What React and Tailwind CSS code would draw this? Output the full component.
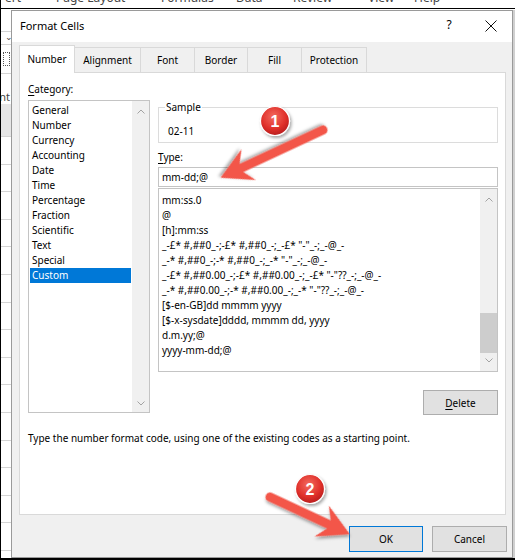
import React from "react";

const cats = ["General","Number","Currency","Accounting","Date","Time","Percentage","Fraction","Scientific","Text","Special","Custom"];
const codes = [
  "mm:ss.0",
  "@",
  "[h]:mm:ss",
  '_-£* #,##0_-;-£* #,##0_-;_-£* "-"_-;_-@_-',
  '_-* #,##0_-;-* #,##0_-;_-* "-"_-;_-@_-',
  '_-£* #,##0.00_-;-£* #,##0.00_-;_-£* "-"??_-;_-@_-',
  '_-* #,##0.00_-;-* #,##0.00_-;_-* "-"??_-;_-@_-',
  "[$-en-GB]dd mmmm yyyy",
  "[$-x-sysdate]dddd, mmmm dd, yyyy",
  "d.m.yy;@",
  "yyyy-mm-dd;@",
];

const tabs = [
  { t: "Number", w: "w-[56px]", sel: true },
  { t: "Alignment", w: "w-[66px]" },
  { t: "Font", w: "w-[54px]" },
  { t: "Border", w: "w-[53px]" },
  { t: "Fill", w: "w-[54px]" },
  { t: "Protection", w: "w-[65px]" },
];

function Up() {
  return (
    <svg width="8" height="5" viewBox="0 0 8 5"><polyline points="0.5,4.5 4,1 7.5,4.5" fill="none" stroke="#a3a3a3" strokeWidth="1" /></svg>
  );
}
function Down() {
  return (
    <svg width="8" height="5" viewBox="0 0 8 5"><polyline points="0.5,0.5 4,4 7.5,0.5" fill="none" stroke="#a3a3a3" strokeWidth="1" /></svg>
  );
}

function Arrow({ x, y, angle, len }) {
  const L = len;
  return (
    <g filter="url(#sh)" transform={`translate(${x} ${y}) rotate(${angle})`}>
      <line x1="0" y1="0" x2={L - 22} y2="0" stroke="#f3564a" strokeWidth="9" strokeLinecap="round" />
      <polygon points={`${L - 23},-4.5 ${L - 31},-17 ${L},0 ${L - 31},17 ${L - 23},4.5`} fill="#f3564a" />
    </g>
  );
}

function Badge({ x, y, n }) {
  return (
    <g>
      <circle cx={x} cy={y} r="14.5" fill="url(#rb)" stroke="#ffffff" strokeWidth="1.2" filter="url(#sh)" />
      <text x={x} y={y + 5.5} textAnchor="middle" fill="#ffffff" fontFamily="Liberation Sans, Arial, sans-serif" fontWeight="700" fontSize="16">{n}</text>
    </g>
  );
}

export default function App() {
  return (
    <div className="relative w-[515px] h-[560px] overflow-hidden bg-white text-black font-['Noto_Sans',sans-serif] text-[10px] leading-[14px]">
      {/* ribbon remnants */}
      <div className="h-[8px] overflow-hidden border-l border-black">
        <div className="flex mt-[-10px] text-[12px] leading-[16px] text-[#444] whitespace-nowrap">
          <span className="w-[55px] pl-[4px]">ert</span>
          <span className="w-[105px]">Page Layout</span>
          <span className="w-[75px]">Formulas</span>
          <span className="w-[57px]">Data</span>
          <span className="w-[75px]">Review</span>
          <span className="w-[46px]">View</span>
          <span>Help</span>
        </div>
      </div>
      <div className="h-px bg-black" />
      <div className="h-px border-l border-black" />
      <div className="flex h-[548px]">
        {/* left excel strip */}
        <div className="w-[11px] h-full border-l border-black flex flex-col text-[11px] text-[#444] overflow-hidden">
          <div className="h-[22px] shrink-0 border-b border-[#d4d4d4]" />
          <div className="h-[12px] shrink-0 leading-[10px] pl-[4px] text-[9px]">⌄</div>
          <div className="h-[30px] shrink-0 border-t border-b border-[#d4d4d4] flex items-center pl-[2px]">
            <div className="w-[7px] h-[14px] border border-dotted border-[#555]" />
          </div>
          <div className="h-[30px] shrink-0 flex items-end leading-[14px] whitespace-nowrap ml-[-8px]">ent</div>
          <div className="h-[33px] shrink-0 bg-[#e6e6e6] border-b border-[#d4d4d4]" />
          {Array.from({ length: 15 }).map((_, i) => (
            <div key={i} className="h-[27.6px] shrink-0 border-b border-[#d4d4d4]" />
          ))}
        </div>

        {/* dialog */}
        <div className="w-[502px] h-full border border-[#9a9a9a] bg-[#f0f0f0] flex flex-col">
          {/* title bar */}
          <div className="h-[31px] bg-white flex items-start">
            <div className="pl-[8px] pt-[7px] text-[11px] leading-[16px] flex-1">Format Cells</div>
            <div className="w-[12px] pt-[6px] text-[12px] leading-[16px] text-center mr-[30px]">?</div>
            <div className="pt-[9px] mr-[15px]">
              <svg width="12" height="12" viewBox="0 0 12 12">
                <line x1="0.5" y1="0.5" x2="11.5" y2="11.5" stroke="#111" strokeWidth="1" />
                <line x1="11.5" y1="0.5" x2="0.5" y2="11.5" stroke="#111" strokeWidth="1" />
              </svg>
            </div>
          </div>
          {/* tabs */}
          <div className="h-[30px] flex items-end pl-[7px]">
            {tabs.map((tb) =>
              tb.sel ? (
                <div key={tb.t} className={`${tb.w} h-[28px] mb-[-1px] relative z-10 bg-white border-t border-l border-r border-[#d9d9d9] flex justify-center pt-[6px]`}>
                  {tb.t}
                </div>
              ) : (
                <div key={tb.t} className={`${tb.w} h-[25px] border-t border-r border-[#d9d9d9] flex justify-center pt-[5px]`}>
                  {tb.t}
                </div>
              )
            )}
          </div>
          {/* panel */}
          <div className="ml-[7px] w-[487px] h-[443px] bg-white border border-[#d9d9d9] flex flex-col pt-[9px] pl-[8px]">
            <div className="h-[14px]"><span className="underline underline-offset-[2px]">C</span>ategory:</div>
            <div className="mt-[4px] h-[315px] flex">
              {/* category list */}
              <div className="w-[122px] h-[313px] border border-[#c4c4c4] flex">
                <div className="flex-1 pt-[2px]">
                  {cats.map((c) => (
                    <div key={c} className={`mx-[1px] h-[15px] leading-[15px] pl-[2px] ${c === "Custom" ? "bg-[#0078d7] text-white" : ""}`}>{c}</div>
                  ))}
                </div>
                <div className="w-[17px] bg-[#f0f0f0] flex flex-col items-center justify-between pt-[8px] pb-[6px]">
                  <Up />
                  <Down />
                </div>
              </div>
              {/* right column */}
              <div className="ml-[8px] w-[340px] flex flex-col">
                <fieldset className="border border-[#dcdcdc] pl-[9px] pb-[4px] h-[43px]">
                  <legend className="ml-[-3px] px-[1px] leading-[14px]">Sample</legend>
                  <div className="pt-[10px] leading-[14px]">02-11</div>
                </fieldset>
                <div className="mt-[7px] h-[14px]"><span className="underline underline-offset-[2px]">T</span>ype:</div>
                <div className="mt-[3px] h-[20px] border border-[#c4c4c4] pl-[3px] flex items-center">mm-dd;@</div>
                <div className="mt-[1px] h-[184px] border border-[#c4c4c4] flex">
                  <div className="flex-1 pt-[4px] pl-[3px] whitespace-nowrap overflow-hidden">
                    {codes.map((c, i) => (
                      <div key={i} className="h-[15px] leading-[15px]">{c}</div>
                    ))}
                  </div>
                  <div className="w-[17px] bg-[#f0f0f0] flex flex-col">
                    <div className="h-[17px] flex items-center justify-center pt-[4px]"><Up /></div>
                    <div className="flex-1 flex flex-col">
                      <div className="mt-[107px] h-[40px] bg-[#cdcdcd]" />
                    </div>
                    <div className="h-[17px] flex items-center justify-center pb-[4px]"><Down /></div>
                  </div>
                </div>
                <div className="mt-[18px] self-end w-[75px] h-[25px] bg-[#e1e1e1] border border-[#adadad] flex items-center justify-center">
                  <span><span className="underline underline-offset-[2px]">D</span>elete</span>
                </div>
              </div>
            </div>
            <div className="mt-[16px] h-[14px]">Type the number format code, using one of the existing codes as a starting point.</div>
          </div>
          {/* buttons */}
          <div className="mt-[11px] h-[26px] flex justify-end pr-[5px] gap-[9px]">
            <div className="w-[74px] h-[26px] bg-[#e1e1e1] border border-[#0078d7] flex items-center justify-center">OK</div>
            <div className="w-[75px] h-[26px] bg-[#e1e1e1] border border-[#adadad] flex items-center justify-center">Cancel</div>
          </div>
        </div>

        {/* right strip */}
        <div className="w-[2px] h-full bg-[#d0d0d0]" />
      </div>
      <div className="h-[2px] bg-black" />

      {/* annotations */}
      <svg className="absolute left-0 top-0 pointer-events-none" width="515" height="560" viewBox="0 0 515 560">
        <defs>
          <filter id="sh" x="-30%" y="-30%" width="160%" height="160%">
            <feDropShadow dx="1.5" dy="2" stdDeviation="1.5" floodColor="#000" floodOpacity="0.35" />
          </filter>
          <radialGradient id="rb" cx="45%" cy="35%" r="65%">
            <stop offset="0%" stopColor="#f36a5f" />
            <stop offset="65%" stopColor="#e0302a" />
            <stop offset="100%" stopColor="#b81d1d" />
          </radialGradient>
        </defs>
        <Arrow x={323} y={130} angle={155} len={113} />
        <Arrow x={270} y={497} angle={25} len={88} />
        <Badge x={275} y={121} n="1" />
        <Badge x={310} y={489} n="2" />
      </svg>
    </div>
  );
}
